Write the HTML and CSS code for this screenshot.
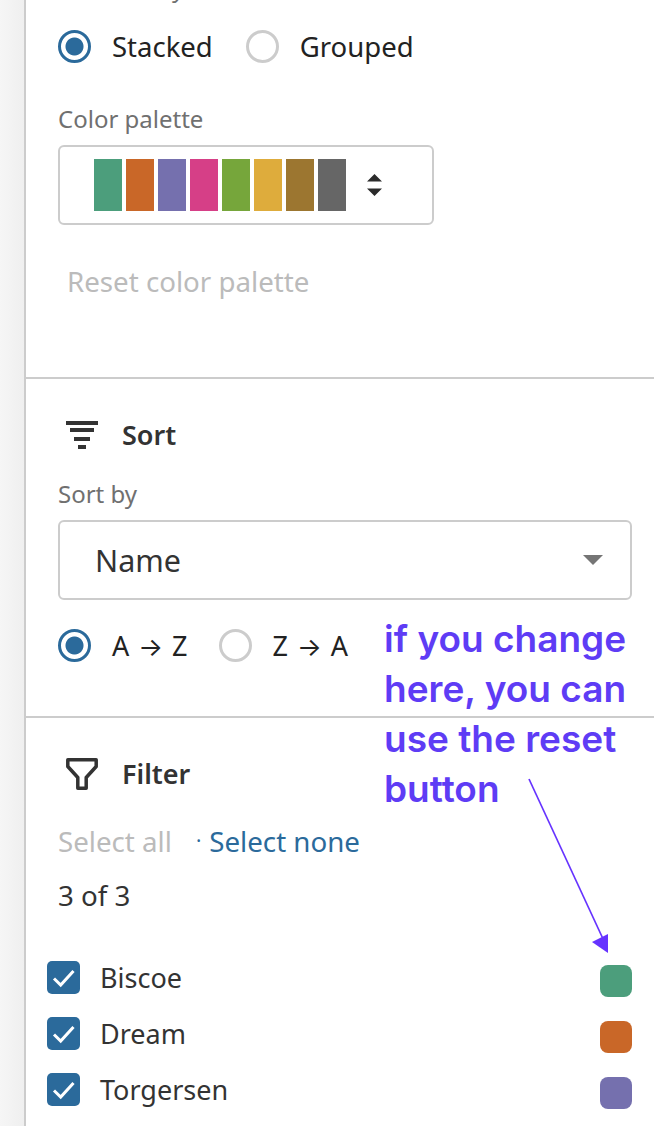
FILE: index.html
```html
<!DOCTYPE html>
<html lang="en">
<head>
  <meta charset="UTF-8">
  <title>Chart options</title>
  <link rel="stylesheet" href="styles.css">
</head>
<body>
  <div class="panel">

    <section class="section section-layout">
      <div class="field-label cut-label">Column layout</div>
      <div class="radio-row">
        <label class="radio-item"><span class="radio checked"></span>Stacked</label>
        <label class="radio-item"><span class="radio"></span>Grouped</label>
      </div>
      <div class="field-label palette-label">Color palette</div>
      <div class="palette-select">
        <span class="swatch" style="background:#4c9e7c"></span>
        <span class="swatch" style="background:#c96728"></span>
        <span class="swatch" style="background:#7570ae"></span>
        <span class="swatch" style="background:#d63f87"></span>
        <span class="swatch" style="background:#76a63b"></span>
        <span class="swatch" style="background:#deac3c"></span>
        <span class="swatch" style="background:#9c7630"></span>
        <span class="swatch" style="background:#666666"></span>
        <svg class="updown" width="15" height="22" viewBox="0 0 15 22"><path d="M7.500 0L15 7.500H0Z M0 14.500H15L7.500 22Z" fill="#2b2b2b"/></svg>
      </div>
      <div class="reset-link">Reset color palette</div>
    </section>

    <section class="section section-sort">
      <h3 class="section-title">
        <svg class="title-icon" width="32" height="28" viewBox="0 0 32 28"><path d="M0 0H32V4H0Z M4 7H28V11H4Z M8 16H24V20H8Z M12 24H20V28H12Z" fill="#333"/></svg>
        Sort
      </h3>
      <div class="field-label sort-label">Sort by</div>
      <div class="select-box">
        <span>Name</span>
        <span class="caret"></span>
      </div>
      <div class="radio-row order-row">
        <label class="radio-item"><span class="radio checked"></span><span>A <span class="arrow">→</span> Z</span></label>
        <label class="radio-item"><span class="radio"></span><span>Z <span class="arrow">→</span> A</span></label>
      </div>
    </section>

    <section class="section section-filter">
      <h3 class="section-title">
        <svg class="title-icon" width="32" height="32" viewBox="0 0 32 32"><path d="M1.800 1.800H30.200V8.500L20.200 19.500V30.200H11.800V19.500L1.800 8.500Z" fill="none" stroke="#333" stroke-width="3.500" stroke-linejoin="round"/></svg>
        Filter
      </h3>
      <div class="select-links">
        <span class="muted">Select all</span>
        <span class="dot">·</span>
        <span class="link">Select none</span>
      </div>
      <div class="count">3 of 3</div>
      <ul class="filter-list">
        <li class="filter-item">
          <span class="checkbox"><svg width="33" height="33" viewBox="0 0 33 33"><path d="M7 17.500L13.700 24L26.500 10" fill="none" stroke="#fff" stroke-width="3"/></svg></span>
          <span class="filter-name">Biscoe</span>
          <span class="color-dot" style="background:#4c9e7c"></span>
        </li>
        <li class="filter-item">
          <span class="checkbox"><svg width="33" height="33" viewBox="0 0 33 33"><path d="M7 17.500L13.700 24L26.500 10" fill="none" stroke="#fff" stroke-width="3"/></svg></span>
          <span class="filter-name">Dream</span>
          <span class="color-dot" style="background:#c96728"></span>
        </li>
        <li class="filter-item">
          <span class="checkbox"><svg width="33" height="33" viewBox="0 0 33 33"><path d="M7 17.500L13.700 24L26.500 10" fill="none" stroke="#fff" stroke-width="3"/></svg></span>
          <span class="filter-name">Torgersen</span>
          <span class="color-dot" style="background:#7570ae"></span>
        </li>
      </ul>
    </section>

  </div>

  <!-- annotation drawn over the screenshot -->
  <div class="note">if you change<br>here, you can<br>use the reset<br>button</div>
  <svg class="note-arrow" width="100" height="190" viewBox="0 0 100 190">
    <path d="M5 5L80 167" stroke="#6633ff" stroke-width="1.700" fill="none"/>
    <path d="M84 179L68 168L84 160Z" fill="#6633ff"/>
  </svg>
</body>
</html>
```

FILE: styles.css
```css
:root {
  --blue: #2b6a9b;
  --line: #cccccc;
  --text: #333;
  --muted: #bbbbbb;
  --label: #707070;
  --violet: #5e3cf5;
}
body {
  margin: 0;
  height: 1126px;
  overflow: hidden;
  position: relative;
  font-family: "Noto Sans", "Open Sans", sans-serif;
  color: var(--text);
  background: linear-gradient(to right, #f6f6f6, #efefef 24px);
}
.panel {
  display: flow-root;
  margin-left: 24px;
  height: 1126px;
  background: #fff;
  border-left: 2px solid var(--line);
}
.section {
  padding-left: 32px;
  border-bottom: 2px solid var(--line);
}
.section:last-child {
  border-bottom: none;
}
.section-layout {
  height: 406px;
  box-sizing: border-box;
}
.section-sort {
  height: 339px;
  box-sizing: border-box;
}

.field-label {
  font-size: 24px;
  line-height: 30px;
  color: var(--label);
}
.cut-label {
  height: 30px;
  margin-top: -27px;
}

.radio-row {
  display: flex;
  align-items: center;
  height: 34px;
  margin-top: 26px;
  font-size: 27.500px;
  color: #222;
}
.radio-item {
  display: flex;
  align-items: center;
  gap: 21px;
  margin-right: 33px;
}
.radio {
  width: 33px;
  height: 33px;
  box-sizing: border-box;
  border: 3px solid var(--line);
  border-radius: 50%;
  background: #fff;
}
.radio.checked {
  border-color: var(--blue);
  background: radial-gradient(circle, var(--blue) 0 8.500px, #fff 9.500px);
}

.palette-label {
  margin-top: 41px;
}
.palette-select {
  display: flex;
  align-items: center;
  gap: 4px;
  box-sizing: border-box;
  width: 376px;
  height: 80px;
  margin-top: 11px;
  padding-left: 34px;
  border: 2px solid var(--line);
  border-radius: 6px;
}
.swatch {
  width: 28px;
  height: 52px;
}
.updown {
  margin-left: 17px;
}
.reset-link {
  margin: 38px 0 0 9px;
  font-size: 27.700px;
  line-height: 36px;
  color: var(--muted);
}

.section-title {
  display: flex;
  align-items: center;
  gap: 24px;
  margin: 0;
  font-size: 27px;
  font-weight: 600;
}
.title-icon {
  margin-left: 8px;
  flex: none;
}
.section-sort .section-title {
  padding-top: 37px;
}
.sort-label {
  margin-top: 26px;
}
.select-box {
  display: flex;
  align-items: center;
  justify-content: space-between;
  box-sizing: border-box;
  width: 574px;
  height: 80px;
  margin-top: 11px;
  padding: 0 27px 0 35px;
  border: 2px solid var(--line);
  border-radius: 6px;
  font-size: 30.500px;
}
.caret {
  width: 0;
  height: 0;
  border-left: 10px solid transparent;
  border-right: 10px solid transparent;
  border-top: 10px solid #757575;
}
.order-row {
  margin-top: 28px;
}
.order-row .radio-item {
  margin-right: 31px;
  font-size: 27px;
}
.arrow {
  font-family: Inter, sans-serif;
  font-size: 26px;
  margin: 0 2px;
}

.section-filter .section-title {
  padding-top: 37px;
}
.select-links {
  display: flex;
  align-items: center;
  margin-top: 31px;
  font-size: 27.700px;
  line-height: 36px;
}
.muted {
  color: var(--muted);
}
.dot {
  margin: 0 8px 0 24px;
  color: var(--blue);
  font-size: 20px;
}
.link {
  color: var(--blue);
}
.count {
  margin-top: 18px;
  font-size: 27.700px;
  line-height: 36px;
}
.filter-list {
  list-style: none;
  margin: 48px 0 0 -11px;
  padding: 0;
  width: 585px;
}
.filter-item {
  display: flex;
  align-items: center;
  height: 33px;
  margin-bottom: 23px;
  font-size: 27px;
}
.checkbox {
  flex: none;
  width: 33px;
  height: 33px;
  border-radius: 5px;
  background: var(--blue);
}
.checkbox svg {
  display: block;
}
.filter-name {
  flex: 1;
  margin-left: 20px;
}
.color-dot {
  flex: none;
  width: 32px;
  height: 32px;
  margin-top: 6px;
  border-radius: 8px;
}

.note {
  position: absolute;
  left: 384px;
  top: 614px;
  font-family: Inter, sans-serif;
  font-size: 37px;
  font-weight: 600;
  line-height: 50px;
  color: var(--violet);
  white-space: nowrap;
}
.note-arrow {
  position: absolute;
  left: 524px;
  top: 774px;
}
```
